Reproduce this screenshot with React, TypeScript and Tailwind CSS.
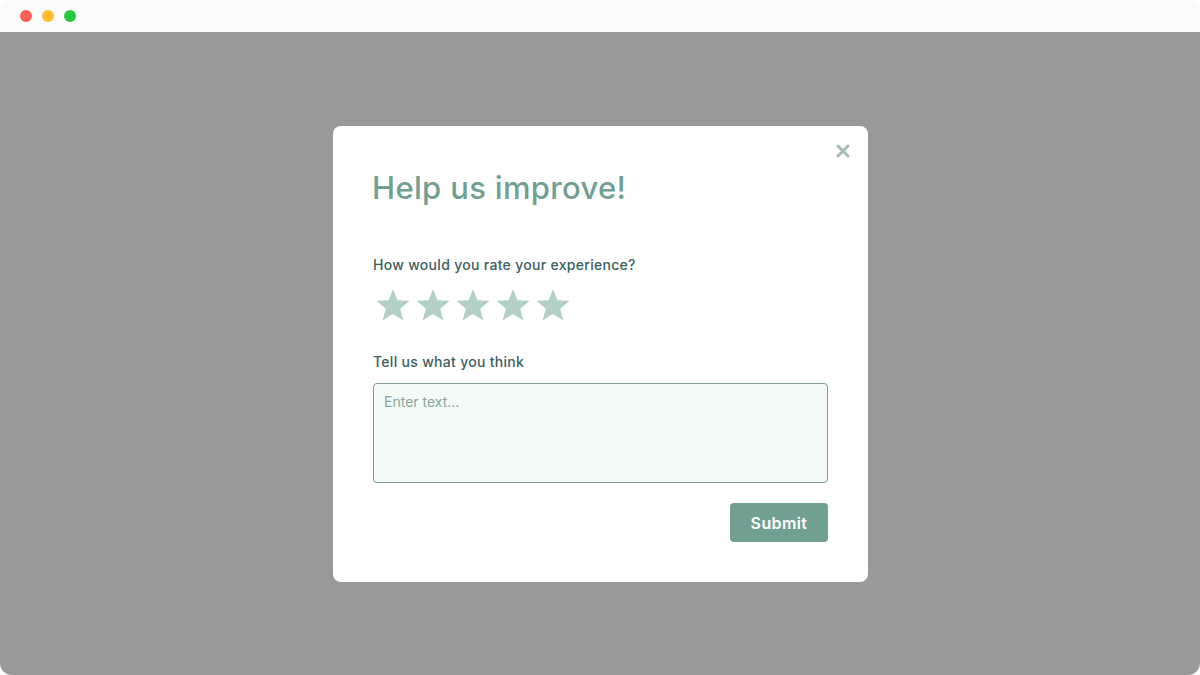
function Star() {
  return (
    <svg width="34" height="32" viewBox="0 0 34 32" className="fill-[#b2d0c7]">
      <path d="M17 0 L21.4 11.2 L33.6 11.8 L24.2 19.8 L27.4 31.6 L17 25 L6.6 31.6 L9.8 19.8 L0.4 11.8 L12.6 11.2 Z" />
    </svg>
  )
}

export default function App() {
  return (
    <div className="w-[1200px] h-[675px] bg-white overflow-hidden font-['Inter',sans-serif]">
      <div className="h-full rounded-xl overflow-hidden flex flex-col">
        <div className="h-8 bg-[#fbfbfb] flex items-center gap-[10px] pl-5 shrink-0">
          <span className="w-3 h-3 rounded-full bg-[#ff5f57]" />
          <span className="w-3 h-3 rounded-full bg-[#febc2e]" />
          <span className="w-3 h-3 rounded-full bg-[#28c840]" />
        </div>
        <div className="flex-1 bg-[#999999] flex items-center justify-center pl-px">
          <div className="relative w-[535px] h-[456px] bg-white rounded-lg px-10 pt-[41px]">
            <button className="absolute top-[18px] right-[18px] w-[14px] h-[14px]">
              <svg width="14" height="14" viewBox="0 0 14 14" fill="none" className="stroke-[#a3bcb6]">
                <path d="M2 2 L12 12 M12 2 L2 12" strokeWidth="3" strokeLinecap="round" />
              </svg>
            </button>
            <h1 className="text-[31px] leading-[42px] font-medium text-[#71a092] tracking-[0.33px] -ml-px">Help us improve!</h1>
            <p className="mt-[46px] text-sm leading-5 font-medium text-[#3b5e60] tracking-[0.3px]">How would you rate your experience?</p>
            <div className="mt-[14px] flex gap-[6px] pl-[3px]">
              <Star />
              <Star />
              <Star />
              <Star />
              <Star />
            </div>
            <p className="mt-[31px] text-sm leading-5 font-medium text-[#3b5e60] tracking-[0.3px]">Tell us what you think</p>
            <textarea
              placeholder="Enter text..."
              className="mt-[11px] block w-[455px] h-[100px] resize-none rounded bg-[#f2fbf8] border border-[#7f9c95] px-[10px] py-2 text-sm leading-5 placeholder:text-[#8aa39d]"
            />
            <div className="mt-5 flex justify-end">
              <button className="w-[98px] h-[39px] pt-px rounded bg-[#71a092] text-white text-base font-semibold tracking-[0.4px]">Submit</button>
            </div>
          </div>
        </div>
      </div>
    </div>
  )
}
